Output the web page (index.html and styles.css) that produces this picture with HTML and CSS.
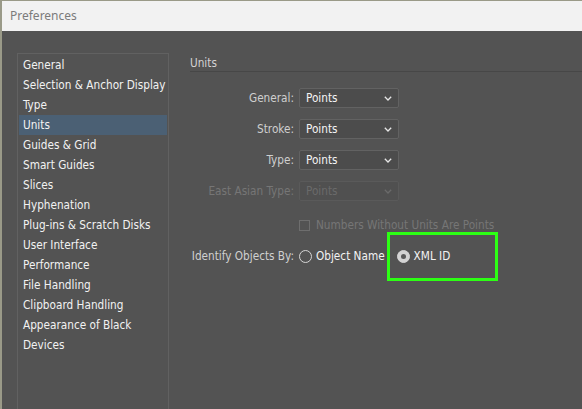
FILE: index.html
```html
<!DOCTYPE html>
<html>
<head>
<meta charset="utf-8">
<link rel="stylesheet" href="styles.css">
</head>
<body>
<div class="window">
  <div class="titlebar">Preferences</div>
  <div class="content">
    <ul class="sidebar">
      <li>General</li>
      <li>Selection &amp; Anchor Display</li>
      <li>Type</li>
      <li class="active">Units</li>
      <li>Guides &amp; Grid</li>
      <li>Smart Guides</li>
      <li>Slices</li>
      <li>Hyphenation</li>
      <li>Plug-ins &amp; Scratch Disks</li>
      <li>User Interface</li>
      <li>Performance</li>
      <li>File Handling</li>
      <li>Clipboard Handling</li>
      <li>Appearance of Black</li>
      <li>Devices</li>
    </ul>
    <div class="main">
      <div class="section-title">Units</div>
      <div class="form">
        <div class="row">
          <span class="label">General:</span>
          <div class="select"><span>Points</span><svg class="chev" width="8" height="5" viewBox="0 0 8 5"><path d="M0.8 0.8 L4 4 L7.2 0.8" fill="none" stroke="#e6e6e6" stroke-width="1.3"/></svg></div>
        </div>
        <div class="row">
          <span class="label">Stroke:</span>
          <div class="select"><span>Points</span><svg class="chev" width="8" height="5" viewBox="0 0 8 5"><path d="M0.8 0.8 L4 4 L7.2 0.8" fill="none" stroke="#e6e6e6" stroke-width="1.3"/></svg></div>
        </div>
        <div class="row">
          <span class="label">Type:</span>
          <div class="select"><span>Points</span><svg class="chev" width="8" height="5" viewBox="0 0 8 5"><path d="M0.8 0.8 L4 4 L7.2 0.8" fill="none" stroke="#e6e6e6" stroke-width="1.3"/></svg></div>
        </div>
        <div class="row disabled">
          <span class="label">East Asian Type:</span>
          <div class="select"><span>Points</span><svg class="chev" width="8" height="5" viewBox="0 0 8 5"><path d="M0.8 0.8 L4 4 L7.2 0.8" fill="none" stroke="#6a6a6a" stroke-width="1.3"/></svg></div>
        </div>
        <div class="row disabled check-row">
          <span class="label"></span>
          <span class="checkbox"></span>
          <span class="check-text">Numbers Without Units Are Points</span>
        </div>
        <div class="row radio-row">
          <span class="label">Identify Objects By:</span>
          <span class="radio"></span>
          <span class="radio-text">Object Name</span>
          <span class="radio checked"></span>
          <span class="radio-text">XML ID</span>
        </div>
      </div>
    </div>
    <div class="highlight-box"></div>
  </div>
</div>
</body>
</html>
```

FILE: styles.css
```css
* { box-sizing: border-box; }
html, body {
  margin: 0;
  padding: 0;
  height: 100%;
  overflow: hidden;
}
body {
  background: #9a9a88;
  font-family: "Noto Sans", "Liberation Sans", sans-serif;
}
.window {
  margin: 1px 0 0 2px;
  height: 408px;
  background: #535353;
  display: flex;
  flex-direction: column;
}
.titlebar {
  height: 30px;
  flex: none;
  background: #f2f2f2;
  color: #7b7b7b;
  font-size: 12px;
  line-height: 30px;
  padding-left: 8px;
}
.content {
  position: relative;
  flex: 1;
  display: flex;
  align-items: stretch;
  padding-top: 22px;
  padding-left: 15px;
}
.sidebar {
  list-style: none;
  margin: 0;
  padding: 1px 1px 0;
  width: 152px;
  border: 1px solid #616161;
  border-bottom: none;
  font-size: 11.7px;
  color: #f2f2f2;
  font-family: "DejaVu Sans Condensed", "DejaVu Sans", sans-serif;
}
.sidebar li {
  height: 20px;
  line-height: 20px;
  padding-left: 4px;
  white-space: nowrap;
}
.sidebar li.active {
  background: #4b6074;
}
.main {
  flex: 1;
  margin-left: 21px;
  font-family: "DejaVu Sans Condensed", "DejaVu Sans", sans-serif;
  font-size: 11.7px;
}
.section-title {
  height: 19px;
  line-height: 20px;
  color: #d2d2d2;
  border-bottom: 1px solid #474747;
}
.form {
  padding-top: 16px;
  display: flex;
  flex-direction: column;
  gap: 11px;
}
.row {
  display: flex;
  align-items: center;
  height: 20px;
  color: #cfcfcf;
}
.label {
  width: 104px;
  text-align: right;
  margin-right: 5px;
  flex: none;
  white-space: nowrap;
}
.select {
  width: 100px;
  height: 20px;
  border: 1px solid #626262;
  border-radius: 2px;
  background: #4c4c4c;
  color: #f4f4f4;
  display: flex;
  align-items: center;
  justify-content: space-between;
  padding: 0 6px 0 6px;
}
.chev { display: block; }
.disabled { color: #767676; }
.disabled .select {
  color: #6a6a6a;
  border-color: #5a5a5a;
  background: #505050;
}
.check-row { margin-top: 3px; }
.checkbox {
  width: 11px;
  height: 11px;
  border: 1px solid #6e6e6e;
  margin-right: 6px;
  flex: none;
}
.check-text { white-space: nowrap; }
.radio-row { margin-top: 0; color: #d0d0d0; }
.radio {
  width: 13px;
  height: 13px;
  border: 1.5px solid #d6d6d6;
  border-radius: 50%;
  flex: none;
  margin-right: 4px;
}
.radio.checked {
  background: #d4d4d4;
  border-color: #d4d4d4;
  margin-left: 12px;
  display: flex;
  align-items: center;
  justify-content: center;
}
.radio.checked::after {
  content: "";
  width: 5px;
  height: 5px;
  border-radius: 50%;
  background: #5a5a5a;
}
.radio-text { color: #f2f2f2; white-space: nowrap; }
.highlight-box {
  position: absolute;
  left: 385px;
  top: 201px;
  width: 111px;
  height: 49px;
  border: 3px solid #2cff14;
}
```
